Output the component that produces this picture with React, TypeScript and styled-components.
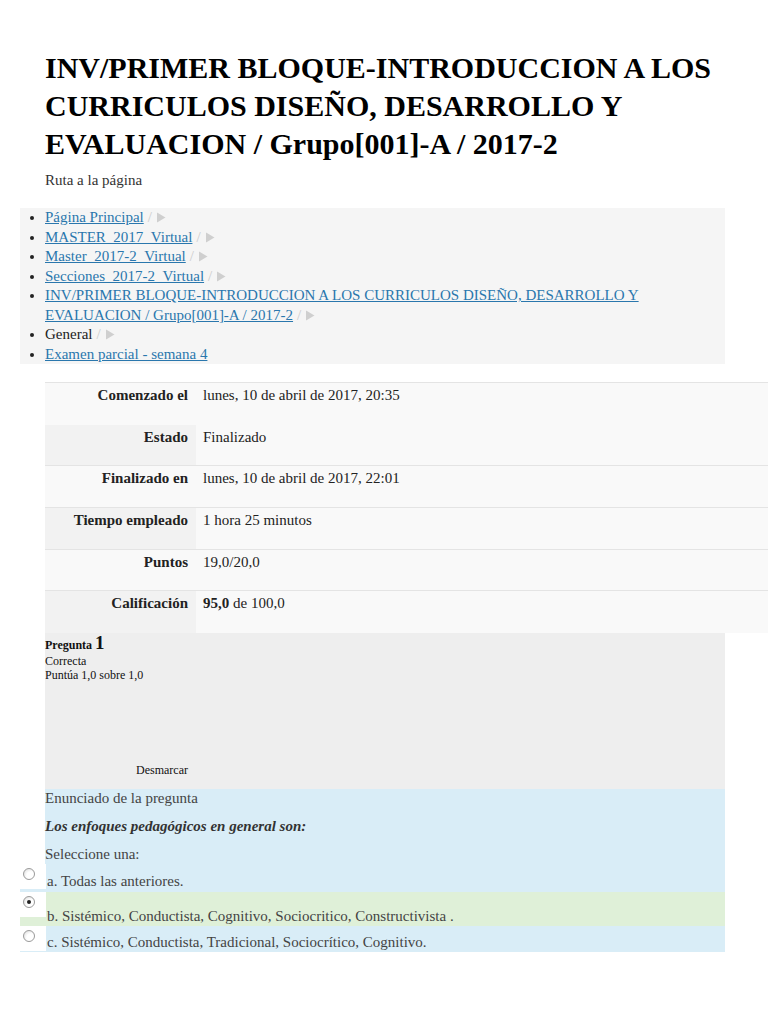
import React from 'react';
import styled, { createGlobalStyle } from 'styled-components';

type Crumb = { label: string; link: boolean; last?: boolean };

const crumbs: Array<Crumb> = [
    { label: 'Página Principal', link: true },
    { label: 'MASTER_2017_Virtual', link: true },
    { label: 'Master_2017-2_Virtual', link: true },
    { label: 'Secciones_2017-2_Virtual', link: true },
    {
        label: 'INV/PRIMER BLOQUE-INTRODUCCION A LOS CURRICULOS DISEÑO, DESARROLLO Y EVALUACION / Grupo[001]-A / 2017-2',
        link: true,
    },
    { label: 'General', link: false },
    { label: 'Examen parcial - semana 4', link: true, last: true },
];

type Summary = { label: string; value: React.ReactNode };

const summary: Array<Summary> = [
    { label: 'Comenzado el', value: 'lunes, 10 de abril de 2017, 20:35' },
    { label: 'Estado', value: 'Finalizado' },
    { label: 'Finalizado en', value: 'lunes, 10 de abril de 2017, 22:01' },
    { label: 'Tiempo empleado', value: '1 hora 25 minutos' },
    { label: 'Puntos', value: '19,0/20,0' },
    {
        label: 'Calificación',
        value: (
            <>
                <b>95,0</b> de 100,0
            </>
        ),
    },
];

type Answer = {
    text: string;
    checked: boolean;
    correct: boolean;
    height: number;
    textTop: number;
};

const answers: Array<Answer> = [
    { text: 'a. Todas las anteriores.', checked: false, correct: false, height: 28, textTop: 8 },
    {
        text: 'b. Sistémico, Conductista, Cognitivo, Sociocritico, Constructivista .',
        checked: true,
        correct: true,
        height: 34,
        textTop: 15,
    },
    {
        text: 'c. Sistémico, Conductista, Tradicional, Sociocrítico, Cognitivo.',
        checked: false,
        correct: false,
        height: 26,
        textTop: 7,
    },
];

const Separator = () => (
    <Sep>
        <Slash>/</Slash>
        <svg width="10" height="11" viewBox="0 0 10 11">
            <polygon points="1,0.5 9.5,5.5 1,10.5" fill="#cfcfcf" />
        </svg>
    </Sep>
);

const App = () => {
    return (
        <Page>
            <GlobalStyle />
            <Title>
                INV/PRIMER BLOQUE-INTRODUCCION A LOS CURRICULOS DISEÑO, DESARROLLO Y
                EVALUACION / Grupo[001]-A / 2017-2
            </Title>
            <PathLabel>Ruta a la página</PathLabel>
            <Breadcrumb>
                <CrumbList>
                    {crumbs.map((crumb, index) => (
                        <li key={index}>
                            {crumb.link ? <CrumbLink href="#">{crumb.label}</CrumbLink> : crumb.label}
                            {!crumb.last && <Separator />}
                        </li>
                    ))}
                </CrumbList>
            </Breadcrumb>
            <SummaryTable>
                <tbody>
                    {summary.map((row, index) => (
                        <SummaryRow key={index} noBorder={index === 1}>
                            <SummaryLabel even={index % 2 === 1}>{row.label}</SummaryLabel>
                            <SummaryValue>{row.value}</SummaryValue>
                        </SummaryRow>
                    ))}
                </tbody>
            </SummaryTable>
            <Question>
                <Info>
                    <QuestionNo>
                        Pregunta <Number>1</Number>
                    </QuestionNo>
                    <InfoLine>Correcta</InfoLine>
                    <InfoLine>Puntúa 1,0 sobre 1,0</InfoLine>
                    <Unflag>Desmarcar</Unflag>
                </Info>
                <Content>
                    <ContentLine>Enunciado de la pregunta</ContentLine>
                    <QuestionText>Los enfoques pedagógicos en general son:</QuestionText>
                    <ContentLine>Seleccione una:</ContentLine>
                </Content>
                <Answers>
                    {answers.map((answer, index) => (
                        <AnswerRow key={index} correct={answer.correct} rowHeight={answer.height}>
                            <RadioBox>
                                <Radio checked={answer.checked} />
                            </RadioBox>
                            <AnswerText top={answer.textTop}>{answer.text}</AnswerText>
                        </AnswerRow>
                    ))}
                </Answers>
            </Question>
        </Page>
    );
};

const GlobalStyle = createGlobalStyle`
    html, body {
        margin: 0;
        padding: 0;
        background: #ffffff;
        overflow-x: hidden;
    }

    body {
        font-family: "Liberation Serif", "Times New Roman", serif;
        color: #333333;
    }
`;

const Page = styled.div`
    padding: 49px 43px 60px 45px;
    width: 680px;
`;

const Title = styled.h1`
    margin: 0;
    font-size: 30px;
    line-height: 38px;
    font-weight: bold;
    color: #000000;
`;

const PathLabel = styled.div`
    margin-top: 8px;
    font-size: 15px;
    line-height: 19.5px;
    color: #333333;
`;

const Breadcrumb = styled.nav`
    margin: 17.5px 0 0 -25px;
    background-color: #f5f5f5;
`;

const CrumbList = styled.ul`
    margin: 0;
    padding: 0 0 0 25px;
    font-size: 15px;
    line-height: 19.5px;
    color: #222222;
`;

const CrumbLink = styled.a`
    color: #2a77ad;
    text-decoration: underline;
`;

const Sep = styled.span`
    margin-left: 4px;

    svg {
        margin-left: 4px;
        vertical-align: -1px;
    }
`;

const Slash = styled.span`
    color: #cccccc;
`;

const SummaryTable = styled.table`
    margin-top: 18px;
    width: 740px;
    border-collapse: collapse;
    font-size: 15px;
    color: #222222;
`;

const SummaryRow = styled.tr<{ noBorder: boolean }>`
    height: 41.7px;
    background-color: #f9f9f9;
    border-top: 1px solid ${(props) => (props.noBorder ? '#f9f9f9' : '#e4e4e4')};
`;

const SummaryLabel = styled.th<{ even: boolean }>`
    width: 135px;
    padding: 4px 8px 0 8px;
    text-align: right;
    vertical-align: top;
    line-height: 17px;
    font-weight: bold;
    background-color: ${(props) => (props.even ? '#f2f2f2' : '#f9f9f9')};
`;

const SummaryValue = styled.td`
    padding: 4px 7px 0 7px;
    vertical-align: top;
    line-height: 17px;
`;

const Question = styled.div`
    width: 680px;
`;

const Info = styled.div`
    height: 156px;
    background-color: #eeeeee;
    display: flex;
    flex-direction: column;
    font-size: 12px;
    line-height: 14px;
    color: #111111;
`;

const QuestionNo = styled.div`
    margin-top: 1px;
    font-weight: bold;
    line-height: 18px;
`;

const Number = styled.span`
    font-size: 19px;
`;

const InfoLine = styled.div``;

const Unflag = styled.div`
    margin: auto 0 12px 91px;
`;

const Content = styled.div`
    background-color: #d9edf7;
    font-size: 15px;
    line-height: 19.5px;
    color: #444444;
`;

const ContentLine = styled.p`
    margin: 0;
    padding-bottom: 8.5px;

    &:last-child {
        padding-bottom: 0;
    }
`;

const QuestionText = styled(ContentLine)`
    font-weight: bold;
    font-style: italic;
    color: #333333;
`;

const Answers = styled.div`
    margin-left: -25px;
    width: 705px;
    font-size: 15px;
    color: #444444;
`;

const AnswerRow = styled.div<{ correct: boolean; rowHeight: number }>`
    display: flex;
    height: ${(props) => props.rowHeight}px;
    background-color: ${(props) => (props.correct ? '#dff0d8' : '#d9edf7')};
`;

const RadioBox = styled.div`
    width: 26px;
    height: 25px;
    margin-right: 1px;
    background-color: #ffffff;
    flex-shrink: 0;
`;

const Radio = styled.span<{ checked: boolean }>`
    position: relative;
    display: block;
    width: 10px;
    height: 10px;
    margin: 4px 0 0 3px;
    border-radius: 50%;
    border: 1px solid #9a9a9a;
    background: radial-gradient(circle at 65% 65%, #ffffff 40%, #d6d6d6 100%);

    &::after {
        content: '';
        display: ${(props) => (props.checked ? 'block' : 'none')};
        position: absolute;
        left: 3px;
        top: 3px;
        width: 4px;
        height: 4px;
        border-radius: 50%;
        background-color: #222222;
    }
`;

const AnswerText = styled.div<{ top: number }>`
    padding-top: ${(props) => props.top}px;
    line-height: 19.5px;
`;

export default App;
